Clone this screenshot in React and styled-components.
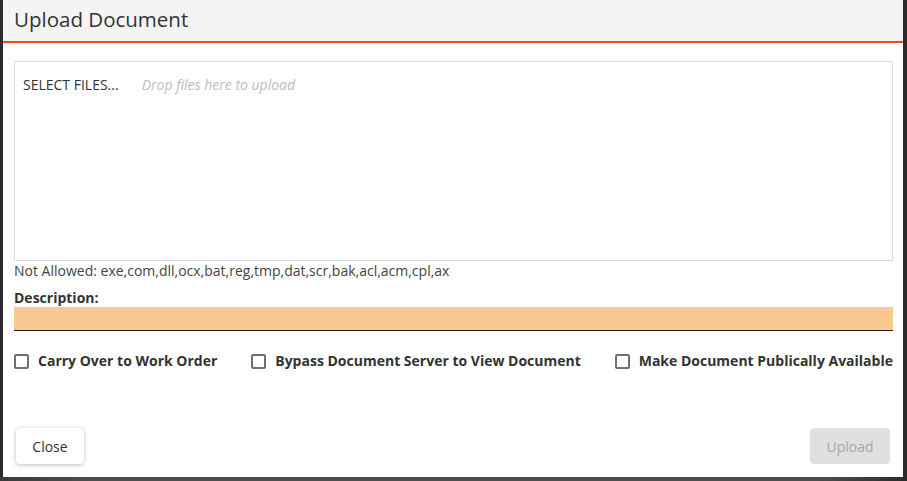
import React from "react";
import styled, { createGlobalStyle } from "styled-components";

const Global = createGlobalStyle`
  html, body { margin: 0; padding: 0; }
  *, *::before, *::after { box-sizing: border-box; }
  body {
    background: #2c2c2c;
    font-family: "Open Sans", "Noto Sans", sans-serif;
    width: 907px;
    height: 481px;
    overflow: hidden;
  }
`;

const Page = styled.div`
  display: flex;
  flex-direction: column;
  width: 907px;
  height: 481px;
`;

const Modal = styled.div`
  margin-left: 3px;
  width: 900px;
  height: 477px;
  background: #fff;
  display: flex;
  flex-direction: column;
`;

const BottomShade = styled.div`
  flex: 1;
  background: linear-gradient(90deg, #3a3a3a 0%, #4e4e4e 10%, #4e4e4e 90%, #2c2c2c 100%);
`;

const Header = styled.div`
  height: 43px;
  background: #f4f4f4;
  border-bottom: 2px solid #ee4b17;
  display: flex;
  align-items: center;
  padding-left: 11px;
`;

const Title = styled.h1`
  margin: 0;
  font-size: 20.5px;
  font-weight: 400;
  color: #333;
  line-height: 1;
  padding-bottom: 2px;
`;

const Body = styled.div`
  flex: 1;
  display: flex;
  flex-direction: column;
  padding: 18px 10px 13px 11px;
`;

const DropZone = styled.div`
  height: 200px;
  border: 1px solid #dcdcdc;
  display: flex;
  align-items: flex-start;
  padding: 13px 8px 0;
  gap: 23px;
`;

const SelectFiles = styled.span`
  font-size: 14px;
  line-height: 19px;
  color: #333;
`;

const DropHint = styled.span`
  font-size: 14px;
  line-height: 19px;
  font-style: italic;
  color: #bdbdbd;
`;

const Note = styled.div`
  font-size: 14px;
  line-height: 19px;
  color: #444;
`;

const Label = styled.div`
  margin-top: 8px;
  font-size: 14px;
  line-height: 19px;
  font-weight: 700;
  color: #333;
`;

const Input = styled.input`
  height: 24px;
  border: none;
  border-bottom: 1px solid #222;
  background: #f9c98f;
  padding: 0 6px;
  margin: 0;
  outline: none;
  font-family: inherit;
`;

const CheckRow = styled.div`
  margin-top: 20px;
  display: flex;
  justify-content: space-between;
  align-items: center;
`;

const Check = styled.label`
  display: flex;
  align-items: center;
  gap: 9px;
  font-size: 14px;
  font-weight: 700;
  color: #333;
  line-height: 20px;
`;

const Box = styled.span`
  width: 15px;
  height: 15px;
  border: 2px solid #707070;
  border-radius: 2px;
  flex: none;
`;

const Footer = styled.div`
  margin-top: auto;
  display: flex;
  justify-content: space-between;
  padding: 0 3px 0 2px;
`;

const Button = styled.button`
  height: 36px;
  padding: 0 16px;
  border: none;
  border-radius: 4px;
  font-family: inherit;
  font-size: 14px;
  background: ${(p) => (p.$disabled ? "#e0e0e0" : "#fff")};
  color: ${(p) => (p.$disabled ? "#a8a8a8" : "#333")};
  box-shadow: ${(p) =>
    p.$disabled ? "none" : "0 1px 4px rgba(0,0,0,0.25), 0 0 1px rgba(0,0,0,0.15)"};
  min-width: ${(p) => (p.$disabled ? "80px" : "68px")};
`;

export default function App() {
  return (
    <Page>
      <Global />
      <Modal>
        <Header>
          <Title>Upload Document</Title>
        </Header>
        <Body>
          <DropZone>
            <SelectFiles>SELECT FILES...</SelectFiles>
            <DropHint>Drop files here to upload</DropHint>
          </DropZone>
          <Note>Not Allowed: exe,com,dll,ocx,bat,reg,tmp,dat,scr,bak,acl,acm,cpl,ax</Note>
          <Label>Description:</Label>
          <Input type="text" />
          <CheckRow>
            <Check><Box />Carry Over to Work Order</Check>
            <Check><Box />Bypass Document Server to View Document</Check>
            <Check><Box />Make Document Publically Available</Check>
          </CheckRow>
          <Footer>
            <Button>Close</Button>
            <Button $disabled>Upload</Button>
          </Footer>
        </Body>
      </Modal>
      <BottomShade />
    </Page>
  );
}
